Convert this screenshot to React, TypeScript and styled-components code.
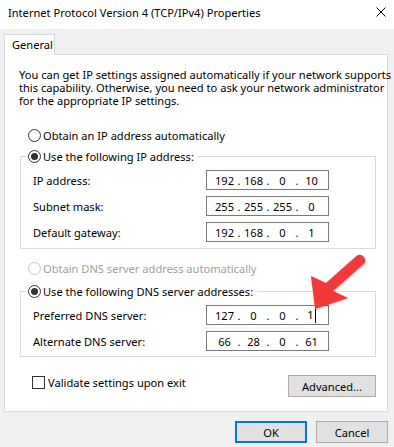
import React from 'react';
import styled, { createGlobalStyle } from 'styled-components';

const GlobalStyle = createGlobalStyle`
  html, body {
    margin: 0;
    padding: 0;
  }
  body {
    background: #f0f0f0;
    font-family: 'Noto Sans', 'Open Sans', sans-serif;
    font-size: 11.1px;
    color: #000;
  }
  * {
    box-sizing: border-box;
  }
`;

const Dialog = styled.div`
  position: relative;
  width: 394px;
  height: 447px;
  background: #f0f0f0;
  overflow: hidden;
`;

const TitleBar = styled.div`
  height: 29px;
  background: #fff;
  display: flex;
  align-items: center;
  justify-content: space-between;
  padding: 0 8px 5px 8px;
`;

const Title = styled.span`
  white-space: nowrap;
`;

const Body = styled.div`
  padding: 5px 6px 0 4px;
`;

const TabStrip = styled.div`
  display: flex;
`;

const Tab = styled.div`
  position: relative;
  z-index: 1;
  width: 51px;
  height: 21px;
  margin-bottom: -1px;
  padding: 0 0 2px 7px;
  display: flex;
  align-items: center;
  background: #fff;
  border: 1px solid #d9d9d9;
  border-bottom: none;
`;

const Panel = styled.div`
  height: 358px;
  background: #fff;
  border: 1px solid #d9d9d9;
  padding: 13px 11px 0 15px;
`;

const Intro = styled.p`
  margin: 0 0 0 -1px;
  line-height: 13px;
  white-space: nowrap;
`;

const RadioRow = styled.label<{ $disabled?: boolean; $top: number }>`
  display: flex;
  align-items: center;
  height: 16px;
  margin-top: ${(p) => p.$top}px;
  padding-left: 8px;
  gap: 2px;
  color: ${(p) => (p.$disabled ? '#a0a0a0' : '#000')};
  white-space: nowrap;
`;

const RadioCircle = styled.span<{ $checked?: boolean; $disabled?: boolean }>`
  width: 13px;
  height: 13px;
  border-radius: 50%;
  border: 1px solid ${(p) => (p.$disabled ? '#c6c6c6' : '#333')};
  background: #fff;
  display: flex;
  align-items: center;
  justify-content: center;
  flex-shrink: 0;
  &::after {
    content: '';
    display: ${(p) => (p.$checked ? 'block' : 'none')};
    width: 7px;
    height: 7px;
    border-radius: 50%;
    background: #333;
  }
`;

const Group = styled.fieldset<{ $top: number; $bottom: number }>`
  margin: ${(p) => p.$top}px 0 0 0;
  padding: 6px 46px ${(p) => p.$bottom}px 11px;
  border: 1px solid #dcdcdc;
  min-width: 0;
  display: flex;
  flex-direction: column;
  gap: 6px;
`;

const Legend = styled.legend`
  margin-left: -4px;
  padding: 0 4px 0 0;
  height: 16px;
`;

const LegendRadio = styled.span`
  display: flex;
  align-items: center;
  height: 16px;
  gap: 2px;
  white-space: nowrap;
`;

const FieldRow = styled.div`
  display: flex;
  align-items: center;
  height: 20px;
`;

const FieldLabel = styled.span`
  flex: 1;
  padding-left: 1px;
  white-space: nowrap;
`;

const IpBox = styled.div`
  width: 123px;
  height: 20px;
  border: 1px solid #7a7a7a;
  display: flex;
  align-items: center;
  padding-left: 6px;
`;

const Octet = styled.span`
  width: 23px;
  text-align: center;
  white-space: nowrap;
`;

const Dot = styled.span`
  width: 6px;
  text-align: center;
`;

const Caret = styled.span`
  display: inline-block;
  width: 1px;
  height: 14px;
  margin-left: 1px;
  background: #000;
  vertical-align: middle;
`;

const BottomRow = styled.div`
  display: flex;
  align-items: flex-start;
  justify-content: space-between;
  margin-top: 18px;
  padding-left: 12px;
`;

const CheckLabel = styled.label`
  display: flex;
  align-items: center;
  gap: 3px;
  margin-top: 1px;
  height: 13px;
  white-space: nowrap;
`;

const CheckBox = styled.span`
  width: 13px;
  height: 13px;
  border: 1px solid #333;
  background: #fff;
`;

const Button = styled.button<{ $width: number; $default?: boolean }>`
  width: ${(p) => p.$width}px;
  height: 22px;
  padding: 0;
  background: #e1e1e1;
  border: ${(p) => (p.$default ? '2px solid #0078d7' : '1px solid #adadad')};
  font-family: inherit;
  font-size: 11.1px;
  color: #000;
`;

const Footer = styled.div`
  display: flex;
  justify-content: flex-end;
  gap: 9px;
  margin-top: 9px;
`;

const Overlay = styled.svg`
  position: absolute;
  left: 0;
  top: 0;
  pointer-events: none;
  filter: drop-shadow(1px 1px 1px rgba(0, 0, 0, 0.25));
`;

const IpField: React.FC<{ value: string[]; caret?: boolean }> = ({ value, caret }) => (
  <IpBox>
    {value.map((v, i) => (
      <React.Fragment key={i}>
        {i > 0 && <Dot>.</Dot>}
        <Octet>
          {v}
          {caret && i === 3 && <Caret />}
        </Octet>
      </React.Fragment>
    ))}
  </IpBox>
);

const App: React.FC = () => {
  return (
    <Dialog>
      <GlobalStyle />
      <TitleBar>
        <Title>Internet Protocol Version 4 (TCP/IPv4) Properties</Title>
        <svg width='10' height='10' viewBox='0 0 10 10'>
          <path d='M0.5 0.5 L9.5 9.5 M9.5 0.5 L0.5 9.5' stroke='#000' strokeWidth='1' />
        </svg>
      </TitleBar>
      <Body>
        <TabStrip>
          <Tab>General</Tab>
        </TabStrip>
        <Panel>
          <Intro>
            You can get IP settings assigned automatically if your network supports
            <br />
            this capability. Otherwise, you need to ask your network administrator
            <br />
            for the appropriate IP settings.
          </Intro>
          <RadioRow $top={20}>
            <RadioCircle />
            Obtain an IP address automatically
          </RadioRow>
          <Group $top={5} $bottom={6}>
            <Legend>
              <LegendRadio>
                <RadioCircle $checked />
                Use the following IP address:
              </LegendRadio>
            </Legend>
            <FieldRow>
              <FieldLabel>IP address:</FieldLabel>
              <IpField value={['192', '168', '0', '10']} />
            </FieldRow>
            <FieldRow>
              <FieldLabel>Subnet mask:</FieldLabel>
              <IpField value={['255', '255', '255', '0']} />
            </FieldRow>
            <FieldRow>
              <FieldLabel>Default gateway:</FieldLabel>
              <IpField value={['192', '168', '0', '1']} />
            </FieldRow>
          </Group>
          <RadioRow $top={11} $disabled>
            <RadioCircle $disabled />
            Obtain DNS server address automatically
          </RadioRow>
          <Group $top={7} $bottom={5}>
            <Legend>
              <LegendRadio>
                <RadioCircle $checked />
                Use the following DNS server addresses:
              </LegendRadio>
            </Legend>
            <FieldRow>
              <FieldLabel>Preferred DNS server:</FieldLabel>
              <IpField value={['127', '0', '0', '1']} caret />
            </FieldRow>
            <FieldRow>
              <FieldLabel>Alternate DNS server:</FieldLabel>
              <IpField value={['66', '28', '0', '61']} />
            </FieldRow>
          </Group>
          <BottomRow>
            <CheckLabel>
              <CheckBox />
              Validate settings upon exit
            </CheckLabel>
            <Button $width={88}>Advanced...</Button>
          </BottomRow>
        </Panel>
        <Footer>
          <Button $width={72} $default>OK</Button>
          <Button $width={72}>Cancel</Button>
        </Footer>
      </Body>
      <Overlay width='394' height='447' viewBox='0 0 394 447'>
        <path
          d='M315 309 L311 276 L325.9 282.9 L356.4 255.9 A5.5 5.5 0 0 1 363.6 264.1 L333.1 291.1 L348 298 Z'
          fill='#f0393b'
        />
      </Overlay>
    </Dialog>
  );
};

export default App;
